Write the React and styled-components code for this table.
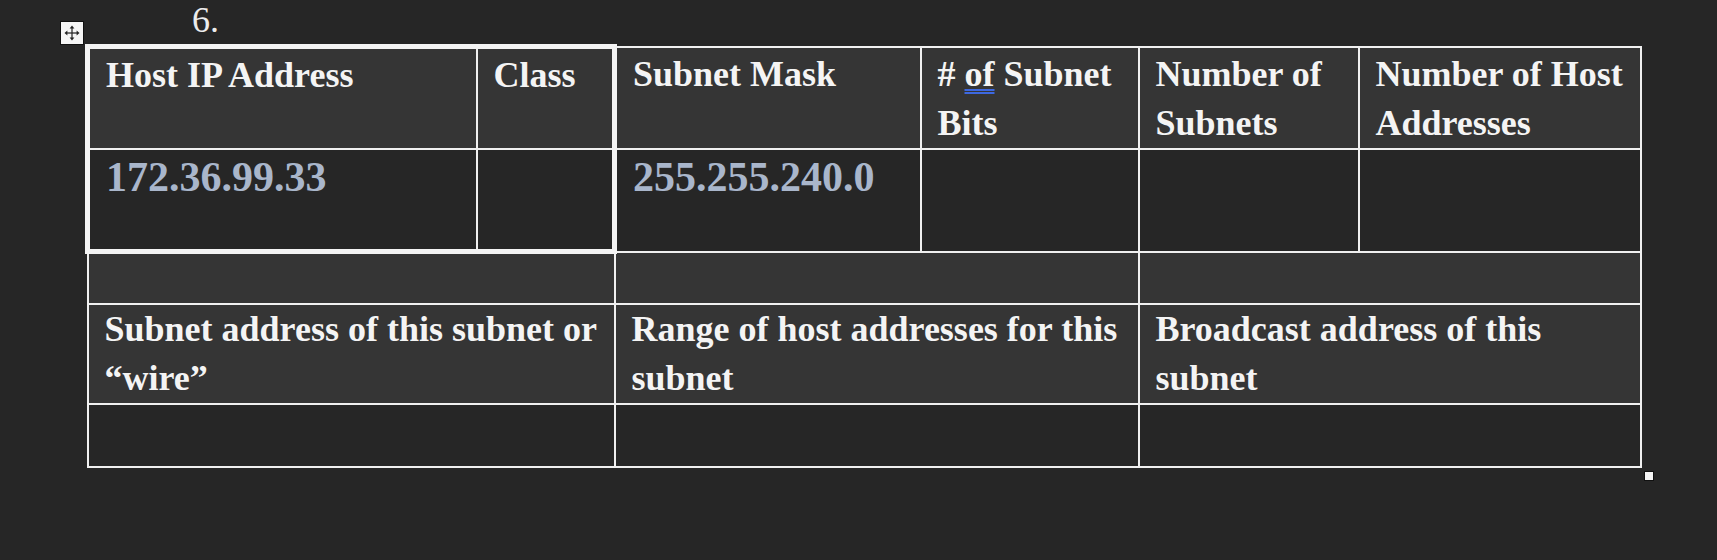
import styled, { createGlobalStyle } from 'styled-components';

const GlobalStyle = createGlobalStyle`
  body {
    margin: 0;
    background: #262626;
    font-family: "Liberation Serif", "Times New Roman", serif;
  }
`;

const Page = styled.div`
  background: #262626;
  min-height: 560px;
`;

const Heading = styled.p`
  margin: 0;
  padding-left: 192px;
  height: 40px;
  font-size: 36px;
  line-height: 40px;
  color: #ececec;
`;

const TableWrap = styled.div`
  position: relative;
  margin: 4px 0 0 85px;
  width: fit-content;
`;

const MoveHandle = styled.div`
  position: absolute;
  left: -24px;
  top: -22px;
  width: 22px;
  height: 22px;
  background: #f5f5f5;
  box-shadow: 0 0 0 1px #111;
  display: flex;
  align-items: center;
  justify-content: center;
`;

const CornerHandle = styled.div`
  position: absolute;
  right: -11px;
  bottom: -12px;
  width: 8px;
  height: 8px;
  background: #f5f5f5;
  box-shadow: 0 0 0 1px #111;
`;

const Grid = styled.table`
  border-collapse: collapse;
  table-layout: fixed;
  width: 1553px;
`;

const Row = styled.tr`
  height: ${p => p.$h}px;
`;

const thick = '5px solid #f4f4f4';

const Cell = styled.td`
  border: 2px solid #f0f0f0;
  background: ${p => (p.$head ? '#353535' : '#262626')};
  padding: ${p => p.$pad ?? 2}px 16px 0;
  vertical-align: top;
  font-size: 36px;
  line-height: 49px;
  font-weight: bold;
  color: #f4f4f4;
  ${p => (p.$sel || []).map(side => `border-${side}: ${thick};`).join('')}
`;

const Value = styled.span`
  font-size: 42px;
  color: #a9b6cb;
`;

const Flagged = styled.span`
  text-decoration: underline double #3d68e0;
  text-decoration-thickness: 1.5px;
  text-underline-offset: 3px;
`;

const MoveIcon = () => (
  <svg width="16" height="16" viewBox="0 0 16 16" fill="#222">
    <rect x="7.4" y="3" width="1.2" height="10" />
    <rect x="3" y="7.4" width="10" height="1.2" />
    <polygon points="8,0.5 5.6,3.4 10.4,3.4" />
    <polygon points="8,15.5 5.6,12.6 10.4,12.6" />
    <polygon points="0.5,8 3.4,5.6 3.4,10.4" />
    <polygon points="15.5,8 12.6,5.6 12.6,10.4" />
  </svg>
);

const widths = [389, 138, 306, 218, 220, 282];

export default function App() {
  return (
    <Page>
      <GlobalStyle />
      <Heading>6.</Heading>
      <TableWrap>
        <MoveHandle>
          <MoveIcon />
        </MoveHandle>
        <Grid>
          <colgroup>
            {widths.map((w, i) => (
              <col key={i} style={{ width: w }} />
            ))}
          </colgroup>
          <tbody>
            <Row $h={101}>
              <Cell $head $sel={['top', 'left']}>Host IP Address</Cell>
              <Cell $head $sel={['top', 'right']}>Class</Cell>
              <Cell $head>Subnet Mask</Cell>
              <Cell $head>
                # <Flagged>of</Flagged> Subnet Bits
              </Cell>
              <Cell $head>Number of Subnets</Cell>
              <Cell $head>Number of Host Addresses</Cell>
            </Row>
            <Row $h={103}>
              <Cell $sel={['bottom', 'left']} $pad={3}>
                <Value>172.36.99.33</Value>
              </Cell>
              <Cell $sel={['bottom', 'right']} />
              <Cell $pad={3}>
                <Value>255.255.240.0</Value>
              </Cell>
              <Cell />
              <Cell />
              <Cell />
            </Row>
            <Row $h={52}>
              <Cell $head colSpan={2} />
              <Cell $head colSpan={2} />
              <Cell $head colSpan={2} />
            </Row>
            <Row $h={96}>
              <Cell $head $pad={0} colSpan={2}>
                Subnet address of this subnet or “wire”
              </Cell>
              <Cell $head $pad={0} colSpan={2}>
                Range of host addresses for this subnet
              </Cell>
              <Cell $head $pad={0} colSpan={2}>
                Broadcast address of this subnet
              </Cell>
            </Row>
            <Row $h={63}>
              <Cell colSpan={2} />
              <Cell colSpan={2} />
              <Cell colSpan={2} />
            </Row>
          </tbody>
        </Grid>
        <CornerHandle />
      </TableWrap>
    </Page>
  );
}
